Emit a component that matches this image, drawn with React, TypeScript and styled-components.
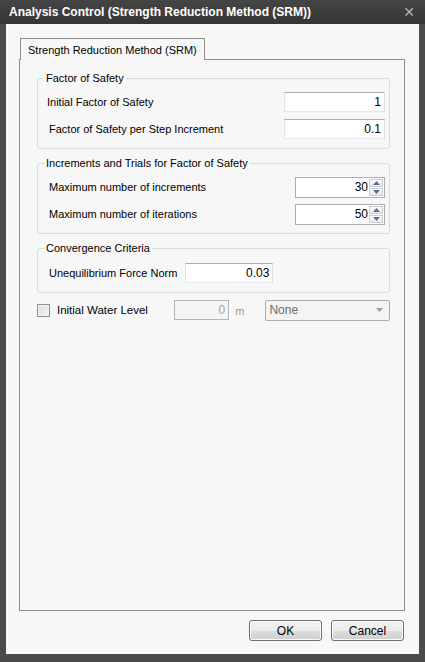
import React from "react";
import styled, { createGlobalStyle } from "styled-components";

const GlobalStyle = createGlobalStyle`
  html, body {
    margin: 0;
    padding: 0;
    background: #4a4a4a;
  }
  * {
    box-sizing: border-box;
  }
`;

const Window = styled.div`
  width: 425px;
  height: 662px;
  display: flex;
  flex-direction: column;
  background: #4b4b4b;
  font-family: "Liberation Sans", Arial, sans-serif;
  font-size: 11px;
  color: #000;
`;

const TitleBar = styled.div`
  height: 24px;
  display: flex;
  align-items: center;
  justify-content: space-between;
  padding: 0 10px 0 9px;
  background: linear-gradient(#454545, #353535);
  color: #fff;
  font-weight: bold;
  font-size: 12px;
`;

const CloseGlyph = styled.span`
  color: #b4b4b4;
  font-size: 14px;
  font-weight: bold;
  font-family: "DejaVu Sans", sans-serif;
  line-height: 1;
`;

const Client = styled.div`
  flex: 1;
  display: flex;
  flex-direction: column;
  margin: 0 6px 8px 6px;
  padding: 14px 14px 13px 13px;
  background: #f7f7f7;
`;

const TabStrip = styled.div`
  display: flex;
  padding-left: 1px;
`;

const Tab = styled.div`
  height: 22px;
  padding: 0 7px;
  display: flex;
  align-items: center;
  border: 1px solid #8e8e8e;
  border-bottom: none;
  background: #f7f7f7;
  margin-bottom: -1px;
  position: relative;
  z-index: 1;
`;

const TabPanel = styled.div`
  flex: 1;
  border: 1px solid #8e8e8e;
  padding: 11px 14px 0 17px;
  display: flex;
  flex-direction: column;
`;

const Group = styled.fieldset`
  margin: 0 0 7px 0;
  padding: 7px 4px 9px 9px;
  border: 1px solid #d5dde3;
  border-radius: 3px;
  display: flex;
  flex-direction: column;
  gap: 7px;
`;

const Legend = styled.legend`
  padding: 0 2px;
  margin-left: -3px;
  line-height: 14px;
`;

const Row = styled.div`
  display: flex;
  align-items: center;
  justify-content: space-between;
  height: 20px;
`;

const Label = styled.span<{ $indent?: number }>`
  padding-left: ${(p) => p.$indent ?? 0}px;
`;

const TextBox = styled.div<{ $w: number; $disabled?: boolean }>`
  width: ${(p) => p.$w}px;
  height: 20px;
  border: 1px solid #abadb3;
  border-color: ${(p) => (p.$disabled ? "#b5b5b5" : "#abadb3 #dbdfe6 #e3e9ef #e2e3ea")};
  background: ${(p) => (p.$disabled ? "#f4f4f4" : "#fff")};
  color: ${(p) => (p.$disabled ? "#a2a2a2" : "#000")};
  display: flex;
  align-items: center;
  justify-content: flex-end;
  padding-right: 3px;
  font-size: 12px;
`;

const SpinBox = styled.div`
  width: 90px;
  height: 21px;
  border: 1px solid #abadb3;
  background: #fff;
  display: flex;
  align-items: stretch;
  padding: 1px;
  font-size: 12px;
`;

const SpinValue = styled.span`
  flex: 1;
  display: flex;
  align-items: center;
  justify-content: flex-end;
  padding-right: 1px;
`;

const SpinButtons = styled.div`
  width: 14px;
  display: flex;
  flex-direction: column;
  gap: 1px;
`;

const SpinButton = styled.div`
  flex: 1;
  border: 1px solid #c9ccd3;
  background: linear-gradient(#fbfbfb, #e6e8ec);
  display: flex;
  align-items: center;
  justify-content: center;
`;

const InlineRow = styled.div<{ $gap: number }>`
  display: flex;
  align-items: center;
  gap: ${(p) => p.$gap}px;
  height: 21px;
`;

const CheckRow = styled.div`
  display: flex;
  align-items: center;
  height: 20px;
`;

const CheckBox = styled.div`
  width: 13px;
  height: 13px;
  border: 1px solid #8f8f8f;
  background: linear-gradient(135deg, #dcdcdc, #f6f6f6);
  box-shadow: inset 0 0 0 1px #f0f0f0;
  margin-right: 7px;
`;

const CheckLabel = styled.span`
  width: 118px;
  font-size: 11.5px;
`;

const Unit = styled.span`
  color: #9a9a9a;
  margin: 2px 21px 0 6px;
`;

const Select = styled.div`
  width: 125px;
  height: 21px;
  border: 1px solid #adadad;
  border-radius: 2px;
  background: #f4f4f4;
  color: #6d6d6d;
  display: flex;
  align-items: center;
  justify-content: space-between;
  padding: 0 6px 0 3px;
  font-size: 12px;
`;

const ButtonRow = styled.div`
  display: flex;
  justify-content: flex-end;
  gap: 9px;
  margin-top: 9px;
  padding-right: 1px;
`;

const Button = styled.div`
  width: 73px;
  height: 21px;
  border: 1px solid #707070;
  border-radius: 3px;
  background: linear-gradient(#f2f2f2 0%, #ebebeb 50%, #dddddd 51%, #cfcfcf 100%);
  box-shadow: inset 0 0 0 1px #fcfcfc;
  display: flex;
  align-items: center;
  justify-content: center;
  font-size: 12px;
`;

const Arrow = ({ up }: { up?: boolean }) => (
  <svg width="7" height="4" viewBox="0 0 7 4">
    <path d={up ? "M0 4 L3.5 0 L7 4 Z" : "M0 0 L3.5 4 L7 0 Z"} fill="#5b6e94" />
  </svg>
);

const Spin = ({ value }: { value: string }) => (
  <SpinBox>
    <SpinValue>{value}</SpinValue>
    <SpinButtons>
      <SpinButton>
        <Arrow up />
      </SpinButton>
      <SpinButton>
        <Arrow />
      </SpinButton>
    </SpinButtons>
  </SpinBox>
);

const App = () => {
  return (
    <>
      <GlobalStyle />
      <Window>
        <TitleBar>
          <span>Analysis Control (Strength Reduction Method (SRM))</span>
          <CloseGlyph>✕</CloseGlyph>
        </TitleBar>
        <Client>
          <TabStrip>
            <Tab>Strength Reduction Method (SRM)</Tab>
          </TabStrip>
          <TabPanel>
            <Group>
              <Legend>Factor of Safety</Legend>
              <Row>
                <Label>Initial Factor of Safety</Label>
                <TextBox $w={101}>1</TextBox>
              </Row>
              <Row>
                <Label $indent={2}>Factor of Safety per Step Increment</Label>
                <TextBox $w={101}>0.1</TextBox>
              </Row>
            </Group>
            <Group>
              <Legend>Increments and Trials for Factor of Safety</Legend>
              <Row>
                <Label $indent={2}>Maximum number of increments</Label>
                <Spin value="30" />
              </Row>
              <Row>
                <Label $indent={2}>Maximum number of iterations</Label>
                <Spin value="50" />
              </Row>
            </Group>
            <Group>
              <Legend>Convergence Criteria</Legend>
              <InlineRow $gap={8}>
                <Label $indent={2}>Unequilibrium Force Norm</Label>
                <TextBox $w={88}>0.03</TextBox>
              </InlineRow>
            </Group>
            <CheckRow>
              <CheckBox />
              <CheckLabel>Initial Water Level</CheckLabel>
              <TextBox $w={55} $disabled>
                0
              </TextBox>
              <Unit>m</Unit>
              <Select>
                <span>None</span>
                <svg width="7" height="4" viewBox="0 0 7 4">
                  <path d="M0 0 L3.5 4 L7 0 Z" fill="#9a9a9a" />
                </svg>
              </Select>
            </CheckRow>
          </TabPanel>
          <ButtonRow>
            <Button>OK</Button>
            <Button>Cancel</Button>
          </ButtonRow>
        </Client>
      </Window>
    </>
  );
};

export default App;
